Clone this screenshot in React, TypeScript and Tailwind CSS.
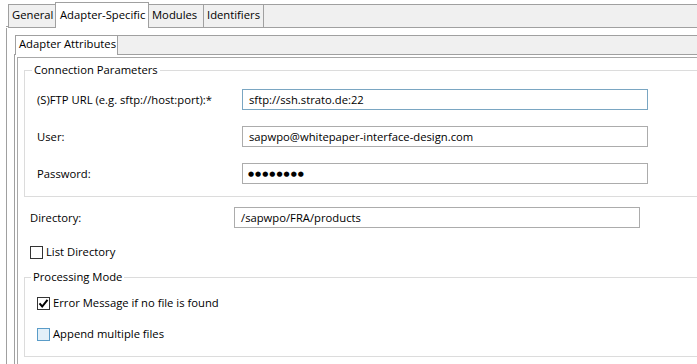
import React from 'react';

const font = "font-['Open_Sans',sans-serif]";

function Tab({ label, active, first, w }: { label: string; active?: boolean; first?: boolean; w: string }) {
  if (active) {
    return (
      <div className={`${w} h-[26px] pl-[4px] flex items-start pt-[4px] bg-white border-t border-x border-[#a0a0a0]`}>
        {label}
      </div>
    );
  }
  return (
    <div
      className={`${w} h-[24px] pl-[3px] flex items-start pt-[2px] bg-[#f0f0f0] border-y border-[#a0a0a0] ${first ? 'border-l' : 'border-r'}`}
    >
      {label}
    </div>
  );
}

function TextField({ value, focused }: { value: string; focused?: boolean }) {
  return (
    <div
      className={`w-[406px] h-[21px] border bg-white flex items-center pl-[6px] ${focused ? 'border-[#7aa6c2]' : 'border-[#acacac]'}`}
    >
      {value}
    </div>
  );
}

function Row({ label, children }: { label: string; children: React.ReactNode }) {
  return (
    <div className="flex items-center h-[21px]">
      <div className="w-[205px] shrink-0">{label}</div>
      {children}
    </div>
  );
}

function Check({ checked, hover }: { checked?: boolean; hover?: boolean }) {
  return (
    <div
      className={`w-[13px] h-[13px] border flex items-center justify-center shrink-0 ${hover ? 'border-[#5a9cc8] bg-[#e3f0f9]' : 'border-[#333333] bg-white'}`}
    >
      {checked && (
        <svg width="11" height="11" viewBox="0 0 11 11">
          <path d="M1.5 5.3 L4.2 8.5 L9.5 1.8" fill="none" stroke="#000" strokeWidth="2" />
        </svg>
      )}
    </div>
  );
}

function CheckRow({ label, checked, hover }: { label: string; checked?: boolean; hover?: boolean }) {
  return (
    <div className="flex items-center h-[16px] gap-[3px]">
      <Check checked={checked} hover={hover} />
      <span>{label}</span>
    </div>
  );
}

export default function App() {
  return (
    <div className={`w-[697px] h-[364px] overflow-hidden bg-white text-[11.25px] leading-[16px] text-black ${font}`}>
      <div className="w-[760px] pl-[6px] pt-[2px]">
        {/* outer tab strip */}
        <div className="flex items-end h-[26px]">
          <div className="w-[2px] h-[1px] bg-[#a0a0a0] mb-[1px]" />
          <Tab label="General" first w="w-[47px]" />
          <Tab label="Adapter-Specific" active w="w-[94px]" />
          <Tab label="Modules" w="w-[55px]" />
          <Tab label="Identifiers" w="w-[60px]" />
          <div className="flex-1 h-[24px] bg-[#f0f0f0] border-y border-[#a0a0a0]" />
        </div>

        {/* outer panel */}
        <div className="border-l border-[#a0a0a0] pl-[7px] pt-[7px]">
          {/* inner tab strip */}
          <div className="flex h-[20px]">
            <div className="w-[1px] border-b border-[#a0a0a0]" />
            <div className="h-[20px] w-[103px] bg-white border-t border-x border-[#a0a0a0] pl-[3px] flex items-start">
              Adapter Attributes
            </div>
            <div className="flex-1 bg-[#f0f0f0] border-y border-[#a0a0a0]" />
          </div>

          {/* inner folder body */}
          <div className="border-l border-[#a0a0a0] pl-[2px] pt-[2px]">
            <div className="border-l border-t border-[#a8a8a8] pl-[6px] pt-[4px] h-[320px]">
              <fieldset className="border border-[#dcdcdc] pl-[12px] pr-0 pt-[11px] pb-[12px] w-[720px]">
                <legend className="px-[2px] -ml-[5px] h-[16px]">Connection Parameters</legend>
                <div className="flex flex-col gap-[16px]">
                  <Row label="(S)FTP URL (e.g. sftp://host:port):*">
                    <TextField value="sftp://ssh.strato.de:22" focused />
                  </Row>
                  <Row label="User:">
                    <TextField value="sapwpo@whitepaper-interface-design.com" />
                  </Row>
                  <Row label="Password:">
                    <div className="w-[406px] h-[21px] border border-[#acacac] bg-white flex items-center pl-[5px] text-[7px] tracking-[1px] font-['DejaVu_Sans',sans-serif]">
                      ●●●●●●●●
                    </div>
                  </Row>
                </div>
              </fieldset>

              <div className="flex items-center h-[21px] mt-[10px] -ml-[6px] pl-[12px]">
                <div className="w-[204px] shrink-0">Directory:</div>
                <TextField value="/sapwpo/FRA/products" />
              </div>

              <div className="mt-[16px] pl-[6px]">
                <CheckRow label="List Directory" />
              </div>

              <fieldset className="border border-[#dcdcdc] pl-[12px] pt-[10px] pb-[14px] mt-[9px] w-[720px]">
                <legend className="px-[2px] -ml-[6px] h-[16px]">Processing Mode</legend>
                <div className="flex flex-col gap-[15px]">
                  <CheckRow label="Error Message if no file is found" checked />
                  <CheckRow label="Append multiple files" hover />
                </div>
              </fieldset>
            </div>
          </div>
        </div>
      </div>
    </div>
  );
}
